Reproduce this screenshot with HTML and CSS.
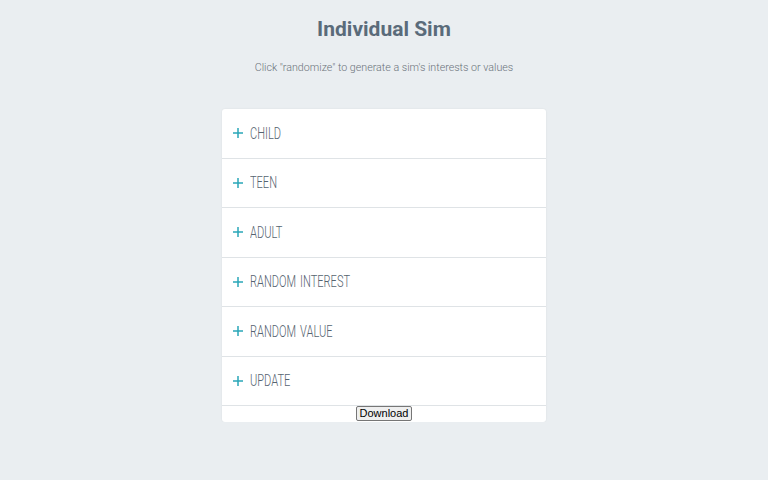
FILE: index.html
```html
<!DOCTYPE html>
<html lang="en">
<head>
    <meta charset="UTF-8">
    <meta name="viewport" content="width=device-width, initial-scale=1.0">
    <title>Individual Sim</title>
    <link rel="stylesheet" href="styles.css">
</head>
<body>

<div class="page">
    <h1>Individual Sim</h1>
    <p class="intro">Click "randomize" to generate a sim's interests or values</p>

    <div class="accordion">
        <div class="acc-item"><svg class="plus" viewBox="0 0 10 10"><path d="M5 0V10M0 5H10"/></svg><span class="label">CHILD</span></div>
        <div class="acc-item"><svg class="plus" viewBox="0 0 10 10"><path d="M5 0V10M0 5H10"/></svg><span class="label">TEEN</span></div>
        <div class="acc-item"><svg class="plus" viewBox="0 0 10 10"><path d="M5 0V10M0 5H10"/></svg><span class="label">ADULT</span></div>
        <div class="acc-item"><svg class="plus" viewBox="0 0 10 10"><path d="M5 0V10M0 5H10"/></svg><span class="label">RANDOM INTEREST</span></div>
        <div class="acc-item"><svg class="plus" viewBox="0 0 10 10"><path d="M5 0V10M0 5H10"/></svg><span class="label">RANDOM VALUE</span></div>
        <div class="acc-item"><svg class="plus" viewBox="0 0 10 10"><path d="M5 0V10M0 5H10"/></svg><span class="label">UPDATE</span></div>
        <div class="download-row"><button>Download</button></div>
    </div>
</div>

</body>
</html>
```

FILE: styles.css
```css
/* Basic styling */
body { margin: 0; background: #eaeef1; font-family: Roboto, "Liberation Sans", sans-serif; }
.page { display: flex; flex-direction: column; align-items: center; padding-top: 15px; }
h1 { margin: 0; font-size: 21px; font-weight: 700; color: #5a6b7a; line-height: 28px; }
.intro { margin: 18px 0 0; font-size: 10.7px; font-weight: 300; color: #6a737b; line-height: 14px; }

/* Accordion */
.accordion { width: 324px; margin-top: 34px; background: #fff; border-radius: 3px; box-shadow: 0 0 2px rgba(0,0,0,0.08); }
.acc-item { height: 48.5px; display: flex; align-items: center; padding-left: 11px; border-bottom: 1px solid #dfe3e6; }
.plus { width: 10px; height: 10px; margin-right: 7px; stroke: #2aa6b8; stroke-width: 1.5; fill: none; }
.label { font-size: 16px; font-weight: 300; color: #55636f; word-spacing: 2px; transform: scaleX(0.69); transform-origin: left center; white-space: nowrap; }

/* Download */
.download-row { display: flex; justify-content: center; height: 16px; }
.download-row button { font-family: "Liberation Sans", Arial, sans-serif; font-size: 11px; padding: 0 3px; height: 15px; line-height: 13px; border: 1px solid #767676; border-radius: 2px; background: #efefef; color: #000; }
```
